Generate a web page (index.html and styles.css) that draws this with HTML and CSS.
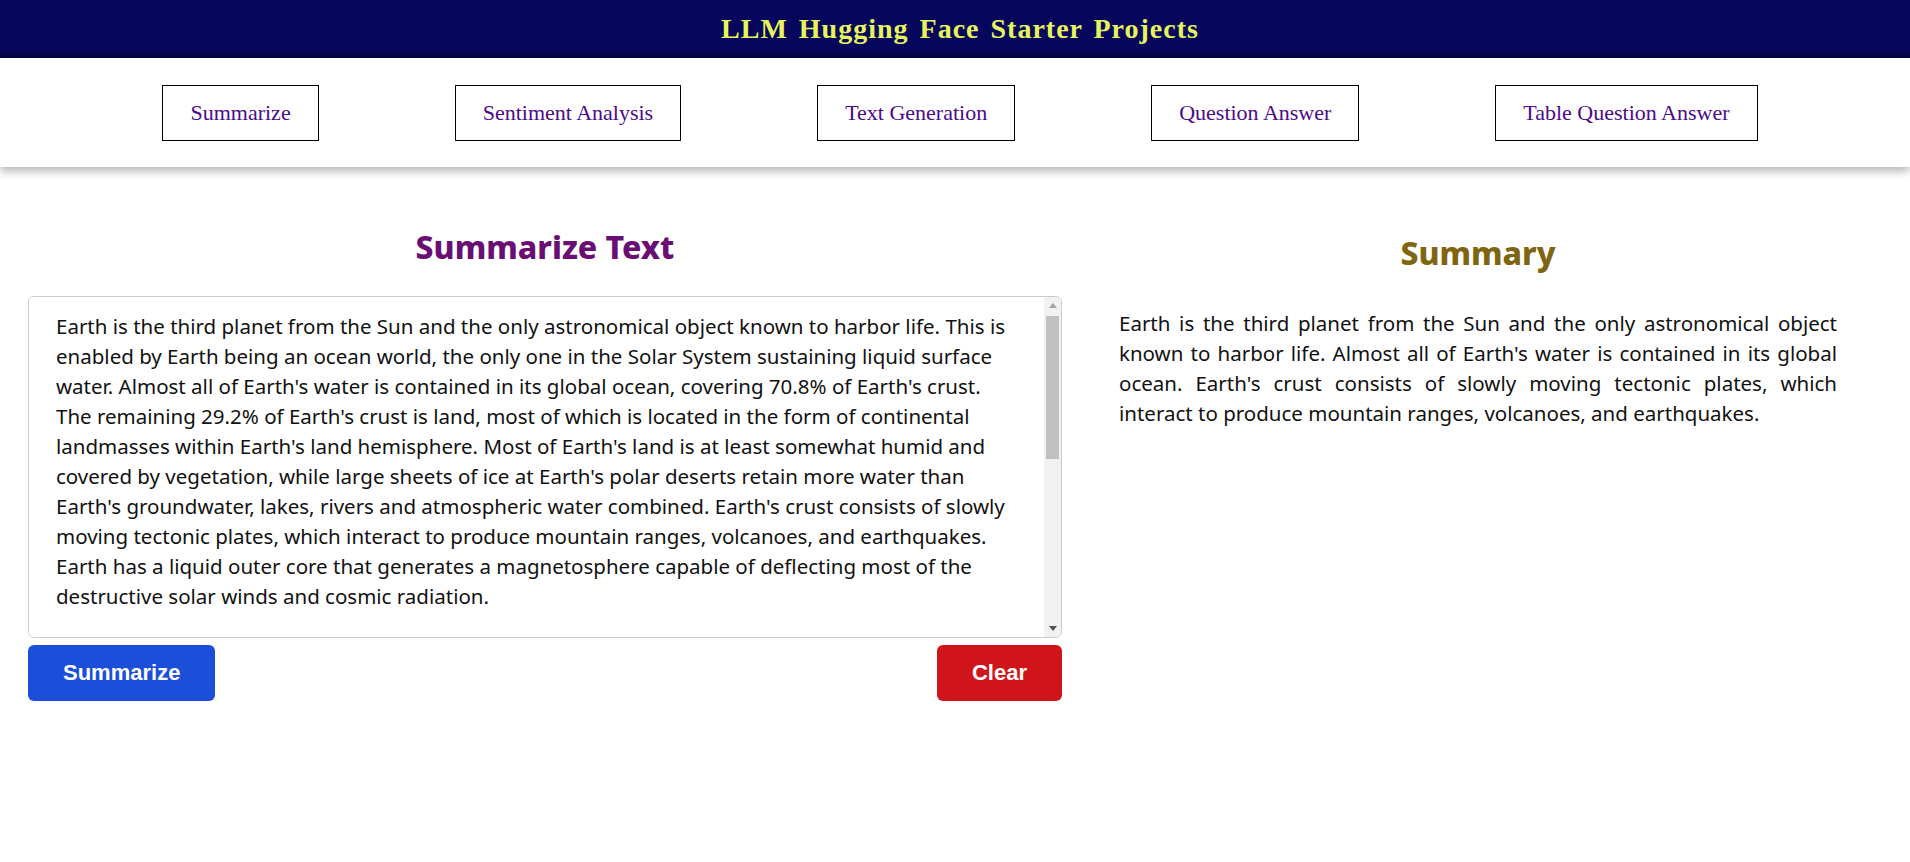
FILE: index.html
```html
<!DOCTYPE html>
<html lang="en">
<head>
<meta charset="utf-8">
<title>LLM Hugging Face Starter Projects</title>
<link rel="stylesheet" href="styles.css">
</head>
<body>
<header class="topbar">
  <h1 class="topbar-title">LLM Hugging Face Starter Projects</h1>
</header>
<nav class="tabs">
  <a class="tab" href="#">Summarize</a>
  <a class="tab" href="#">Sentiment Analysis</a>
  <a class="tab" href="#">Text Generation</a>
  <a class="tab" href="#">Question Answer</a>
  <a class="tab" href="#">Table Question Answer</a>
</nav>
<main class="workspace">
  <section class="input-panel">
    <h2 class="panel-title panel-title-input">Summarize Text</h2>
    <div class="editor">
      <textarea class="source-text">Earth is the third planet from the Sun and the only astronomical object known to harbor life. This is
enabled by Earth being an ocean world, the only one in the Solar System sustaining liquid surface
water. Almost all of Earth's water is contained in its global ocean, covering 70.8% of Earth's crust.
The remaining 29.2% of Earth's crust is land, most of which is located in the form of continental
landmasses within Earth's land hemisphere. Most of Earth's land is at least somewhat humid and
covered by vegetation, while large sheets of ice at Earth's polar deserts retain more water than
Earth's groundwater, lakes, rivers and atmospheric water combined. Earth's crust consists of slowly
moving tectonic plates, which interact to produce mountain ranges, volcanoes, and earthquakes.
Earth has a liquid outer core that generates a magnetosphere capable of deflecting most of the
destructive solar winds and cosmic radiation.</textarea>
      <div class="scrollbar" aria-hidden="true">
        <span class="scroll-arrow scroll-arrow-up"></span>
        <span class="scroll-track"><span class="scroll-thumb"></span></span>
        <span class="scroll-arrow scroll-arrow-down"></span>
      </div>
    </div>
    <div class="actions">
      <button class="btn btn-primary" type="button">Summarize</button>
      <button class="btn btn-danger" type="button">Clear</button>
    </div>
  </section>
  <section class="output-panel">
    <h2 class="panel-title panel-title-output">Summary</h2>
    <p class="summary-text">Earth is the third planet from the Sun and the only astronomical object known to harbor life. Almost all of Earth's water is contained in its global ocean. Earth's crust consists of slowly moving tectonic plates, which interact to produce mountain ranges, volcanoes, and earthquakes.</p>
  </section>
</main>
</body>
</html>
```
FILE: styles.css
```css
* {
  box-sizing: border-box;
}

body {
  margin: 0;
  background: #ffffff;
  color: #111111;
  font-family: "Noto Sans", "Open Sans", sans-serif;
}

.topbar {
  height: 58px;
  padding-left: 10px;
  display: flex;
  align-items: center;
  justify-content: center;
  background: linear-gradient(#06065c 0%, #06065c 86%, #03033f 100%);
}

.topbar-title {
  margin: 0;
  font-family: "Liberation Serif", "Times New Roman", serif;
  font-weight: 700;
  font-size: 28px;
  letter-spacing: 1px;
  word-spacing: 3px;
  color: #e8f45c;
}

.tabs {
  height: 109px;
  padding: 27px 0 0 10px;
  display: flex;
  justify-content: center;
  align-items: flex-start;
  gap: 136px;
  background: #ffffff;
  box-shadow: 0 4px 9px rgba(0, 0, 0, 0.3);
}

.tab {
  height: 56px;
  padding: 0 27px;
  display: flex;
  align-items: center;
  border: 1px solid #000000;
  font-family: "Liberation Serif", "Times New Roman", serif;
  font-size: 22px;
  color: #4b0a8c;
  text-decoration: none;
  white-space: nowrap;
}

.workspace {
  display: flex;
  align-items: flex-start;
  gap: 57px;
  padding: 0 28px;
}

.input-panel {
  width: 1034px;
  flex: none;
}

.output-panel {
  width: 718px;
  flex: none;
}

.panel-title {
  margin: 0;
  text-align: center;
  font-family: "Noto Sans", sans-serif;
  font-weight: 800;
  font-size: 32px;
  line-height: 40px;
}

.panel-title-input {
  margin: 60px 0 29px;
  color: #6a0e74;
}

.panel-title-output {
  margin: 66px 0 35px;
  color: #806511;
}

.editor {
  display: flex;
  height: 342px;
  border: 1px solid #cccccc;
  border-radius: 6px;
  overflow: hidden;
  background: #ffffff;
}

.source-text {
  flex: 1;
  display: block;
  min-width: 0;
  height: 100%;
  margin: 0;
  padding: 14px 8px 14px 27px;
  border: none;
  resize: none;
  overflow: hidden;
  font-family: "Noto Sans", "Open Sans", sans-serif;
  font-size: 20.5px;
  line-height: 30px;
  color: #111111;
  background: #ffffff;
  outline: none;
}

.scrollbar {
  width: 17px;
  flex: none;
  display: flex;
  flex-direction: column;
  background: #f1f1f1;
}

.scroll-arrow {
  height: 17px;
  flex: none;
  display: flex;
  align-items: center;
  justify-content: center;
}

.scroll-arrow::before {
  content: "";
  width: 0;
  height: 0;
  border-left: 4.5px solid transparent;
  border-right: 4.5px solid transparent;
}

.scroll-arrow-up::before {
  border-bottom: 5px solid #a3a3a3;
}

.scroll-arrow-down::before {
  border-top: 5px solid #505050;
}

.scroll-track {
  flex: 1;
  display: block;
  padding: 2px 2px 0;
}

.scroll-thumb {
  display: block;
  height: 143px;
  background: #c1c1c1;
}

.actions {
  margin-top: 7px;
  display: flex;
  justify-content: space-between;
}

.btn {
  height: 56px;
  padding: 0 35px;
  border: none;
  border-radius: 6px;
  font-family: "Liberation Sans", Arial, sans-serif;
  font-weight: 700;
  font-size: 22px;
  color: #ffffff;
  cursor: pointer;
}

.btn-primary {
  background: #1c4fd9;
}

.btn-danger {
  background: #d0151a;
}

.summary-text {
  margin: 0;
  font-size: 20.5px;
  line-height: 30px;
  text-align: justify;
  color: #111111;
}
```
